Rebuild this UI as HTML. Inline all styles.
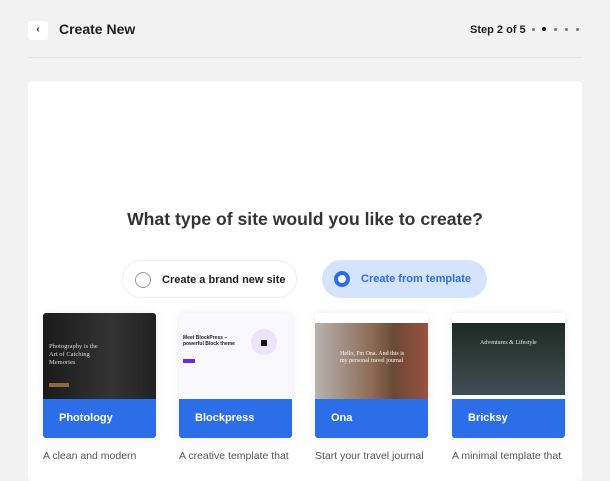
<!DOCTYPE html>
<html><head><style>
*{margin:0;padding:0;box-sizing:border-box}
body{width:610px;height:470px;background:#f2f2f2;font-family:"Liberation Sans",sans-serif;position:relative;overflow:hidden;color:#1e1e1e}
.a{position:absolute}
.back{left:28px;top:21px;width:20px;height:19px;background:#fff;border-radius:3px;font-size:10px;font-weight:bold;text-align:center;line-height:18px}
.title{left:59px;top:21px;font-size:14px;font-weight:bold}
.step{left:470px;top:24px;font-size:11px;font-weight:bold}
.dot{top:28px;width:3px;height:3px;border-radius:50%;background:#777}
.sep{left:28px;top:57px;width:554px;height:1px;background:#e4e4e4}
.card{left:28px;top:81px;width:554px;height:400px;background:#fff;border-radius:4px}
h1{position:absolute;left:0;width:610px;top:209px;text-align:center;font-size:17.6px;font-weight:bold;color:#333}
.pill{top:260px;height:38px;border-radius:19px;font-size:11px;font-weight:bold;line-height:38px;white-space:nowrap}
.radio{position:absolute;left:12px;top:11px;width:16px;height:16px;border-radius:50%}
.tc{width:113px;top:313px;border-radius:3px;overflow:hidden;box-shadow:0 0 8px rgba(0,0,0,.08)}
.img{height:86px}
.lab{height:39px;background:#2c6ee8;color:#fff;font-size:11px;font-weight:bold;line-height:39px;padding-left:16px}
.desc{top:450px;font-size:10.5px;color:#555;white-space:nowrap}
</style></head><body>
<div class="a back">‹</div>
<div class="a title">Create New</div>
<div class="a step">Step 2 of 5</div>
<div class="a dot" style="left:532px"></div>
<div class="a dot" style="left:542px;background:#111;width:4px;height:4px;top:27px"></div>
<div class="a dot" style="left:554px"></div>
<div class="a dot" style="left:565px"></div>
<div class="a dot" style="left:576px"></div>
<div class="a sep"></div>
<div class="a card"></div>
<h1>What type of site would you like to create?</h1>
<div class="a pill" style="left:122px;width:175px;background:#fff;border:1px solid #eee;padding-left:39px"><span class="radio" style="border:1px solid #999"></span>Create a brand new site</div>
<div class="a pill" style="left:322px;width:165px;background:#d6e3fd;color:#2c6ee8;padding-left:39px"><span class="radio" style="border:4px solid #2c6ee8;background:#fff"></span>Create from template</div>

<div class="a tc" style="left:43px"><div class="img" style="background:linear-gradient(90deg,#1a1a1a,#333 60%,#222);position:relative"><div style="position:absolute;left:6px;top:30px;color:#ddd;font-family:'Liberation Serif',serif;font-size:6.5px;line-height:8px">Photography is the<br>Art of Catching<br>Memories</div><div style="position:absolute;left:6px;top:70px;width:20px;height:4px;background:#8a6a3a"></div></div><div class="lab">Photology</div></div>
<div class="a tc" style="left:179px"><div class="img" style="background:#f9f8fc;position:relative"><div style="position:absolute;left:4px;top:22px;font-size:5px;font-weight:bold;line-height:6px">Meet BlockPress –<br>powerful Block theme</div><div style="position:absolute;left:4px;top:46px;width:12px;height:4px;background:#6a2be0"></div><div style="position:absolute;left:72px;top:16px;width:26px;height:26px;border-radius:50%;background:#ebe4fb"></div><div style="position:absolute;left:82px;top:27px;width:6px;height:6px;background:#111"></div></div><div class="lab">Blockpress</div></div>
<div class="a tc" style="left:315px"><div class="img" style="background:linear-gradient(90deg,#b6b3b0,#8d6b55 50%,#6b4a35 70%,#9a5040);position:relative;border-top:10px solid #fff"><div style="position:absolute;left:25px;top:28px;color:#fff;font-family:'Liberation Serif',serif;font-size:6px;line-height:7px">Hello, I'm Ona. And this is<br>my personal travel journal</div></div><div class="lab">Ona</div></div>
<div class="a tc" style="left:452px"><div class="img" style="background:linear-gradient(180deg,#1e2a25,#2f3d3a 50%,#3f4e55);position:relative;border-top:10px solid #fff;border-bottom:4px solid #fff"><div style="position:absolute;left:28px;top:17px;color:#eee;font-family:'Liberation Serif',serif;font-size:6px">Adventures &amp; Lifestyle</div></div><div class="lab">Bricksy</div></div>

<div class="a desc" style="left:43px">A clean and modern</div>
<div class="a desc" style="left:179px">A creative template that</div>
<div class="a desc" style="left:315px">Start your travel journal</div>
<div class="a desc" style="left:452px">A minimal template that</div>
</body></html>
